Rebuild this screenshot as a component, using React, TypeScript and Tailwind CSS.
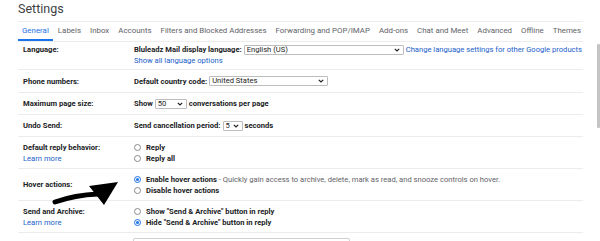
import React from 'react';

const tabs = [
  'General',
  'Labels',
  'Inbox',
  'Accounts',
  'Filters and Blocked Addresses',
  'Forwarding and POP/IMAP',
  'Add-ons',
  'Chat and Meet',
  'Advanced',
  'Offline',
  'Themes',
];

const Chevron = () => (
  <svg width="6" height="4" viewBox="0 0 6 4" className="shrink-0">
    <path d="M0.8 0.8 L3 3 L5.2 0.8" fill="none" stroke="#222" strokeWidth="1.2" />
  </svg>
);

const Select = ({ value, width }: { value: string; width: string }) => (
  <div
    className={`inline-flex h-[10px] items-center justify-between border border-[#bdbdbd] rounded-[1px] pl-[2px] pr-[3px] font-normal text-[#222] ${width}`}
  >
    <span className="leading-[8px]">{value}</span>
    <Chevron />
  </div>
);

const Radio = ({ checked }: { checked?: boolean }) =>
  checked ? (
    <span className="inline-flex h-[7px] w-[7px] shrink-0 items-center justify-center rounded-full border border-[#1a73e8]">
      <span className="h-[3px] w-[3px] rounded-full bg-[#1a73e8]" />
    </span>
  ) : (
    <span className="inline-block h-[7px] w-[7px] shrink-0 rounded-full border border-[#8a8a8a]" />
  );

const RadioLine = ({ checked, children }: { checked?: boolean; children: React.ReactNode }) => (
  <div className="flex h-[11px] items-center gap-[5px] whitespace-nowrap">
    <Radio checked={checked} />
    <span>{children}</span>
  </div>
);

const Row = ({
  label,
  learn,
  h,
  children,
}: {
  label: string;
  learn?: boolean;
  h: string;
  children: React.ReactNode;
}) => (
  <div className={`grid grid-cols-[116px_1fr] items-center border-b border-[#ececec] ${h}`}>
    <div className="pl-[5px]">
      <div className="h-[11px] leading-[11px]">{label}</div>
      {learn && <div className="h-[11px] leading-[11px] font-normal text-[#1a5dc9]">Learn more</div>}
    </div>
    <div>{children}</div>
  </div>
);

export default function App() {
  return (
    <div className="relative h-[241px] w-[600px] overflow-hidden bg-white font-['Roboto',sans-serif] text-[#202124]">
      <div className="pl-[18px] pr-[17px]">
        <div className="h-[22px] border-b border-[#ececec] pt-[1px] text-[12.5px] leading-[15px] text-[#3c4043]">
          Settings
        </div>

        <div className="flex h-[20px] items-stretch gap-[1px] border-b border-[#ececec] text-[7.9px] text-[#5f6368]">
          {tabs.map((t, i) => (
            <div
              key={t}
              className={`flex items-center px-[4px] whitespace-nowrap ${
                i === 0 ? 'border-b-2 border-[#1a73e8] text-[#1a73e8]' : 'border-b-2 border-transparent'
              }`}
            >
              {t}
            </div>
          ))}
        </div>

        <div className="text-[7.6px] font-bold leading-[11px]">
          <div className="grid h-[28px] grid-cols-[116px_1fr] border-b border-[#ececec] pt-[2px]">
            <div className="pl-[5px] leading-[11px]">Language:</div>
            <div>
              <div className="flex h-[11px] items-center gap-[2px] whitespace-nowrap">
                <span>Bluleadz Mail display language:</span>
                <Select value="English (US)" width="w-[160px]" />
                <span className="font-normal text-[#1a5dc9]">Change language settings for other Google products</span>
              </div>
              <div className="h-[11px] font-normal text-[#1a5dc9]">Show all language options</div>
            </div>
          </div>

          <Row label="Phone numbers:" h="h-[23px]">
            <div className="flex items-center gap-[2px]">
              <span>Default country code:</span>
              <Select value="United States" width="w-[119px]" />
            </div>
          </Row>

          <Row label="Maximum page size:" h="h-[22px]">
            <div className="flex items-center gap-[2px]">
              <span>Show</span>
              <Select value="50" width="w-[32px]" />
              <span>conversations per page</span>
            </div>
          </Row>

          <Row label="Undo Send:" h="h-[22px]">
            <div className="flex items-center gap-[2px]">
              <span>Send cancellation period:</span>
              <Select value="5" width="w-[20px]" />
              <span>seconds</span>
            </div>
          </Row>

          <Row label="Default reply behavior:" learn h="h-[32px]">
            <RadioLine>Reply</RadioLine>
            <RadioLine>Reply all</RadioLine>
          </Row>

          <Row label="Hover actions:" h="h-[32px]">
            <RadioLine checked>
              Enable hover actions
              <span className="font-normal text-[#5f6368]">
                {' '}
                - Quickly gain access to archive, delete, mark as read, and snooze controls on hover.
              </span>
            </RadioLine>
            <RadioLine>Disable hover actions</RadioLine>
          </Row>

          <Row label="Send and Archive:" learn h="h-[32px]">
            <RadioLine>Show "Send &amp; Archive" button in reply</RadioLine>
            <RadioLine checked>Hide "Send &amp; Archive" button in reply</RadioLine>
          </Row>

          <div className="grid grid-cols-[116px_1fr] pt-[5px]">
            <div />
            <div className="ml-[-1px] h-[20px] w-[217px] rounded-[2px] border border-[#d0d0d0]" />
          </div>
        </div>
      </div>

      {/* arrow drawn over the page */}
      <svg className="pointer-events-none absolute left-0 top-0" width="600" height="241" viewBox="0 0 600 241">
        <path d="M55 202 Q 75 195 98 194" fill="none" stroke="#000" strokeWidth="5" strokeLinecap="round" />
        <polygon points="89,186 118,182 104,205" fill="#000" />
      </svg>

      {/* scrollbar thumb */}
      <div className="absolute right-0 top-[44px] h-[84px] w-[3px] rounded-[1px] bg-[#c4c4c4]" />
    </div>
  );
}
